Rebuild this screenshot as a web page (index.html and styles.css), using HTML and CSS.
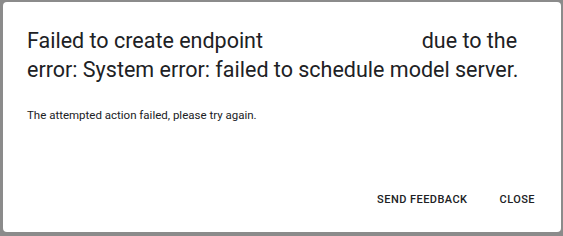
FILE: index.html
```html
<!DOCTYPE html>
<html lang="en">
<head>
    <meta charset="UTF-8">
    <meta name="viewport" content="width=device-width, initial-scale=1.0">
    <title>Error</title>
    <link rel="stylesheet" href="styles.css">
</head>
<body>
    <!-- Error dialog over the dimmed page -->
    <div class="dialog">
        <h2 class="dialog-title">Failed to create endpoint <span class="redacted"></span> due to the error: System error: failed to schedule model server.</h2>
        <p class="dialog-content">The attempted action failed, please try again.</p>
        <div class="dialog-actions">
            <button class="btn">Send feedback</button>
            <button class="btn">Close</button>
        </div>
    </div>
</body>
</html>
```

FILE: styles.css
```css
html, body {
    margin: 0;
    height: 100%;
}
body {
    box-sizing: border-box;
    padding: 2px 2px 4px 3px;
    background: #8b8b8b;
    font-family: Roboto, "Liberation Sans", sans-serif;
    color: #212121;
    display: flex;
}
.dialog {
    flex: 1;
    display: flex;
    flex-direction: column;
    background: #fff;
    border-radius: 4px;
    padding: 24px 18px 18px 24px;
}
.dialog-title {
    margin: 0 10px 0 0;
    font-size: 21.5px;
    font-weight: 400;
    line-height: 29px;
    color: #202124;
}
.redacted {
    display: inline-block;
    width: 148px;
}
.dialog-content {
    margin: 23px 0 0;
    font-size: 11.5px;
    line-height: 16px;
    color: #202124;
}
.dialog-actions {
    margin-top: auto;
    display: flex;
    justify-content: flex-end;
    gap: 16px;
}
.btn {
    font-family: inherit;
    font-size: 11px;
    font-weight: 500;
    letter-spacing: 0.45px;
    text-transform: uppercase;
    height: 29px;
    line-height: 29px;
    padding: 0 8px;
    background: none;
    border: none;
    color: #202124;
    cursor: pointer;
}
```
